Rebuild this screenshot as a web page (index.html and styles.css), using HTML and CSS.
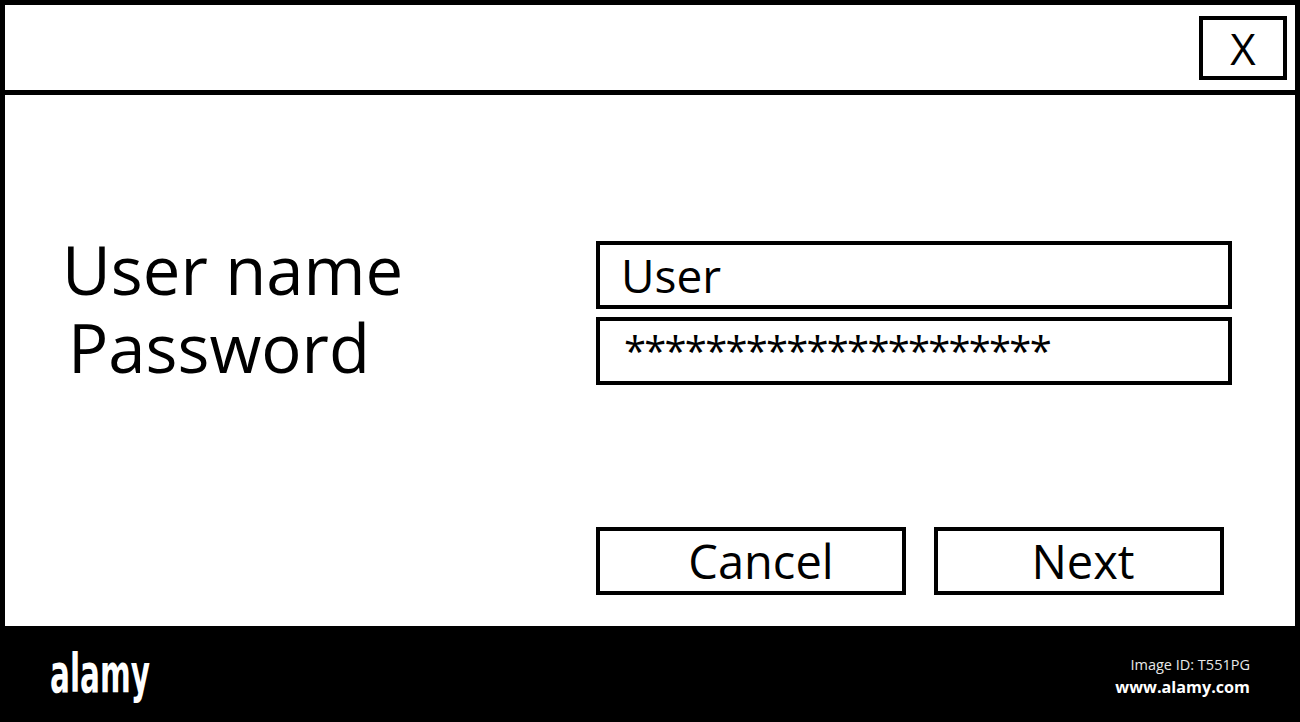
FILE: index.html
```html
<!DOCTYPE html>
<html lang="en">
<head>
<meta charset="utf-8">
<title>Login dialog</title>
<link rel="stylesheet" href="styles.css">
</head>
<body>
<div class="window">
  <div class="titlebar">
    <div class="close">X</div>
  </div>
  <div class="main">
    <div class="labels">
      <div class="label label-user">User name</div>
      <div class="label label-pass">Password</div>
    </div>
    <div class="fields">
      <div class="field field-user">User</div>
      <div class="field field-pass">*********************</div>
      <div class="buttons">
        <div class="btn btn-cancel">Cancel</div>
        <div class="btn btn-next">Next</div>
      </div>
    </div>
  </div>
</div>
<div class="footer">
  <svg class="logo" width="116" height="62" viewBox="0 0 116 62"><text class="logo-text" x="0" y="44" textLength="100" lengthAdjust="spacingAndGlyphs">alamy</text></svg>
  <div class="credits">
    <div class="image-id">Image ID: T551PG</div>
    <div class="site">www.alamy.com</div>
  </div>
</div>
</body>
</html>
```
FILE: styles.css
```css
html, body {
  margin: 0;
  padding: 0;
  background: #fff;
}
body {
  width: 1300px;
  height: 722px;
  overflow: hidden;
  font-family: "Open Sans", "DejaVu Sans", sans-serif;
  color: #000;
}
.window {
  box-sizing: border-box;
  height: 626px;
  border: 5px solid #000;
  border-bottom: 0;
  display: flex;
  flex-direction: column;
}
.titlebar {
  box-sizing: border-box;
  height: 90px;
  border-bottom: 5px solid #000;
  display: flex;
  justify-content: flex-end;
  align-items: flex-start;
  padding: 11px 8px 0 0;
}
.close {
  box-sizing: border-box;
  width: 88px;
  height: 64px;
  border: 4px solid #000;
  display: flex;
  align-items: center;
  justify-content: center;
  font-size: 44px;
  line-height: 1;
}
.main {
  flex: 1;
  display: flex;
}
.labels {
  flex: 0 0 591px;
  padding: 135px 0 0 57px;
  box-sizing: border-box;
}
.label {
  font-size: 67px;
  line-height: 78px;
  white-space: nowrap;
}
.label-pass {
  padding-left: 6px;
}
.fields {
  padding-top: 146px;
  display: flex;
  flex-direction: column;
}
.field {
  box-sizing: border-box;
  width: 636px;
  height: 68px;
  border: 4px solid #000;
  padding-left: 21px;
  font-size: 46px;
  line-height: 60px;
  white-space: nowrap;
  overflow: hidden;
}
.field-pass {
  margin-top: 8px;
  font-size: 40px;
  letter-spacing: -1.75px;
  line-height: 60px;
  padding-left: 24px;
}
.buttons {
  margin-top: 142px;
  display: flex;
  gap: 28px;
}
.btn {
  box-sizing: border-box;
  height: 68px;
  border: 4px solid #000;
  font-size: 47px;
  line-height: 60px;
  text-align: center;
}
.btn-cancel {
  width: 310px;
  padding-left: 20px;
}
.btn-next {
  width: 290px;
  padding-left: 8px;
}
.footer {
  height: 96px;
  background: #000;
  display: flex;
  justify-content: space-between;
  align-items: flex-start;
  padding: 0 50px;
}
.logo {
  display: block;
  margin-top: 22px;
}
.logo-text {
  font-family: "DejaVu Sans", sans-serif;
  font-weight: bold;
  font-size: 54px;
  fill: #fff;
}
.credits {
  padding-top: 27px;
  text-align: right;
  line-height: 23px;
}
.image-id {
  font-size: 14.5px;
  color: #e8e8e8;
}
.site {
  font-size: 16.2px;
  font-weight: bold;
  color: #fff;
}
```
